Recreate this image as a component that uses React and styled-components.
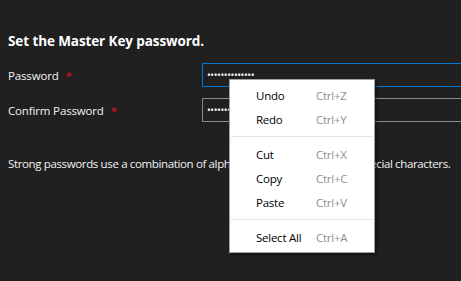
import React from 'react';
import styled, { createGlobalStyle } from 'styled-components';

const GlobalStyle = createGlobalStyle`
  html, body {
    margin: 0;
    padding: 0;
    background: #202020;
    overflow: hidden;
  }
  body {
    font-family: "Segoe UI", "Open Sans", "Noto Sans", sans-serif;
  }
`;

const Page = styled.div`
  position: relative;
  width: 461px;
  height: 281px;
  background: #202020;
  color: #ffffff;
  padding: 32px 0 0 8px;
  box-sizing: border-box;
  overflow: hidden;
`;

const Title = styled.div`
  font-size: 13.5px;
  font-weight: 700;
  letter-spacing: -0.1px;
  line-height: 18px;
  margin-bottom: 13px;
`;

const Row = styled.div`
  display: grid;
  grid-template-columns: 194px 1fr;
  align-items: center;
  height: 24px;
  margin-bottom: ${p => p.gap || 0}px;
`;

const Label = styled.div`
  font-size: 11.5px;
  letter-spacing: -0.15px;
  color: #f2f2f2;
`;

const Star = styled.span`
  color: #e81123;
  margin-left: 7px;
`;

const Field = styled.div`
  height: 24px;
  box-sizing: border-box;
  border: 1px solid ${p => (p.focused ? '#0078d7' : '#8a8a8a')};
  border-right: none;
  margin-right: -10px;
  display: flex;
  align-items: center;
  padding-left: 4px;
  font-size: 10px;
  letter-spacing: -0.4px;
  color: #ffffff;
`;

const Note = styled.div`
  margin-top: 34px;
  font-size: 11.5px;
  letter-spacing: -0.36px;
  color: #f2f2f2;
  white-space: nowrap;
`;

const Menu = styled.div`
  position: absolute;
  left: 229px;
  top: 79px;
  width: 146px;
  box-sizing: border-box;
  background: #ffffff;
  border: 1px solid #a0a0a0;
  box-shadow: 2px 2px 3px rgba(0, 0, 0, 0.45);
  padding: 3px 0 3px;
`;

const Item = styled.div`
  display: grid;
  grid-template-columns: 60px 1fr;
  align-items: center;
  height: 24px;
  padding-left: 26px;
  font-size: 11.5px;
  letter-spacing: -0.25px;
`;

const ItemLabel = styled.span`
  color: #000000;
`;

const Shortcut = styled.span`
  color: #8f8f8f;
`;

const Separator = styled.div`
  height: 1px;
  background: #e3e3e3;
  margin: 5px 1px 5px;
`;

const groups = [
  [['Undo', 'Ctrl+Z'], ['Redo', 'Ctrl+Y']],
  [['Cut', 'Ctrl+X'], ['Copy', 'Ctrl+C'], ['Paste', 'Ctrl+V']],
  [['Select All', 'Ctrl+A']],
];

export default function App() {
  return (
    <>
      <GlobalStyle />
      <Page>
        <Title>Set the Master Key password.</Title>
        <Row gap={11}>
          <Label>Password<Star>*</Star></Label>
          <Field focused>••••••••••••••</Field>
        </Row>
        <Row>
          <Label>Confirm Password<Star>*</Star></Label>
          <Field>••••••••••••••</Field>
        </Row>
        <Note>
          Strong passwords use a combination of alphanumeric characters and special characters.
        </Note>
        <Menu>
          {groups.map((g, gi) => (
            <React.Fragment key={gi}>
              {gi > 0 && <Separator />}
              {g.map(([l, s]) => (
                <Item key={l}>
                  <ItemLabel>{l}</ItemLabel>
                  <Shortcut>{s}</Shortcut>
                </Item>
              ))}
            </React.Fragment>
          ))}
        </Menu>
      </Page>
    </>
  );
}
